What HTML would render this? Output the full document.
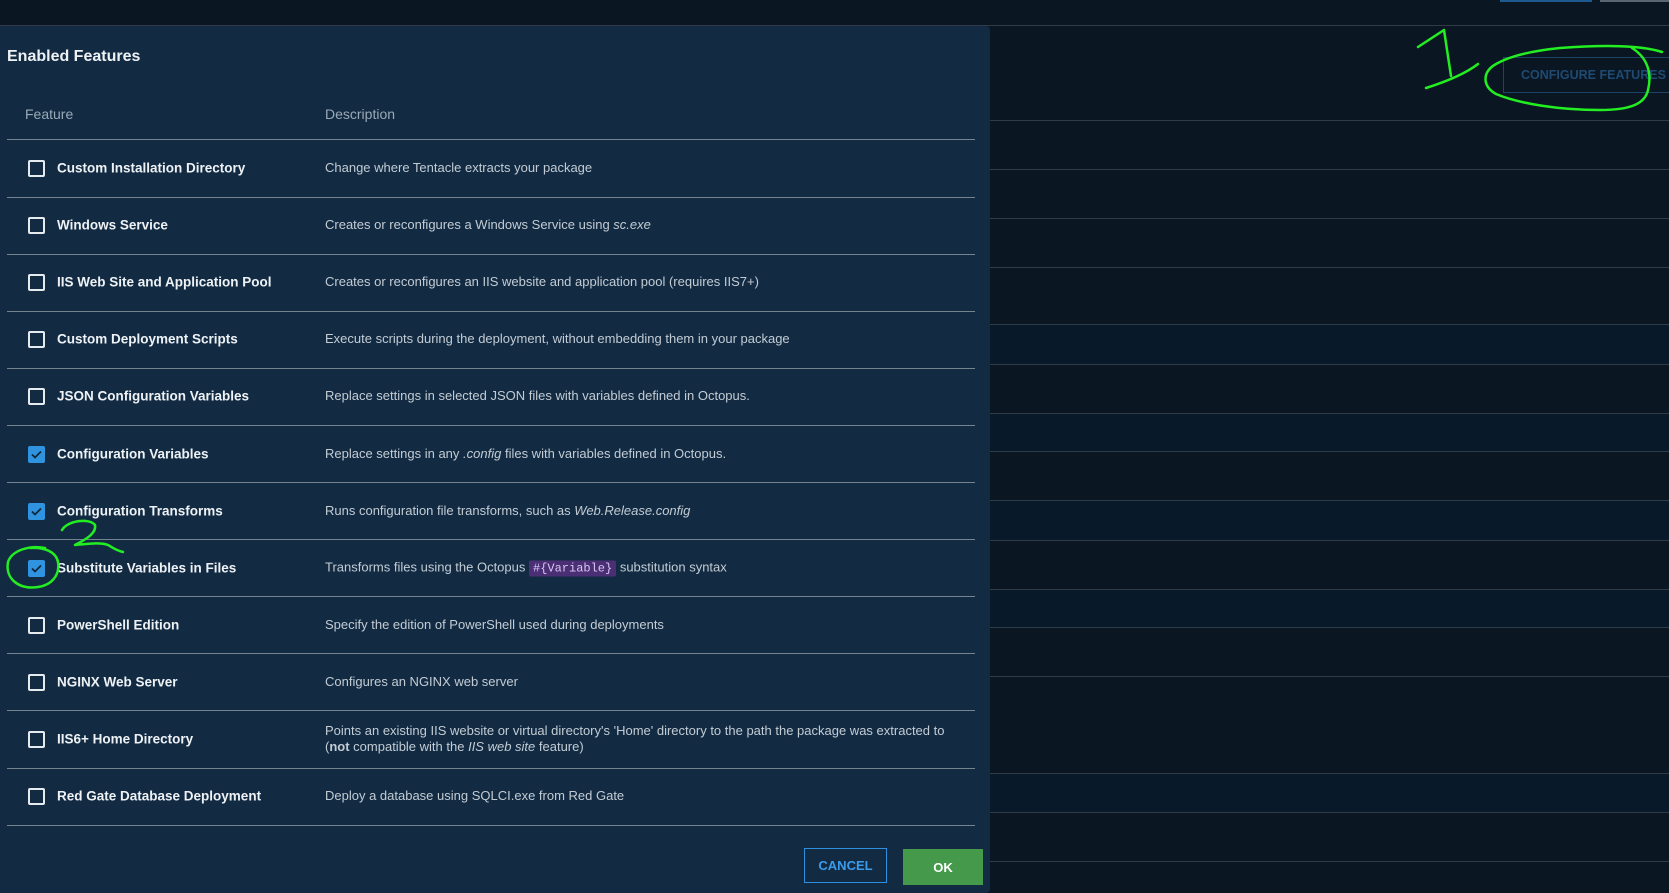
<!DOCTYPE html>
<html><head><meta charset="utf-8"><style>
*{margin:0;padding:0;box-sizing:border-box}
body{width:1669px;height:893px;background:#0a1722;position:relative;overflow:hidden;font-family:"Liberation Sans",sans-serif}
.hl{position:absolute;left:0;right:0;height:1px;background:#2f3c47}
.band{position:absolute;left:0;right:0;background:#081a2a}
#panel{position:absolute;left:0;top:26px;width:990px;height:867px;background:#122b43;border-radius:0 4px 4px 0}
.title{position:absolute;left:7px;top:22px;font-size:16px;font-weight:bold;color:#eef2f5}
.hdr{position:absolute;top:80px;font-size:14px;color:#9aa9b6}
.line{position:absolute;left:7px;width:968px;height:1px;background:#74838f}
.row{position:absolute;left:0;width:975px;height:57px}
.cb{position:absolute;left:28px;top:50%;margin-top:-8px;width:17px;height:17px;border:2px solid #e6ebef;border-radius:2px}
.cb.on{background:#2f93e0;border-color:#2f93e0}
.cb.on svg{position:absolute;left:-2px;top:-2px}
.nm{position:absolute;left:57px;top:50%;transform:translateY(-50%);font-size:13.5px;font-weight:bold;color:#eef2f5}
.ds{position:absolute;left:325px;top:50%;transform:translateY(-50%);font-size:13px;color:#c3ccd4;line-height:16px;width:640px}
code{font-family:"Liberation Mono",monospace;background:#4b2f74;color:#d9c6f3;padding:1px 4px;border-radius:2px;font-size:12px}
.btn{position:absolute;font-size:13px;font-weight:bold;display:flex;align-items:center;justify-content:center}
</style></head><body>
<div class="hl" style="top:25px"></div>
<div class="band" style="top:324px;height:40px"></div>
<div class="band" style="top:413px;height:38px"></div>
<div class="band" style="top:500px;height:40px"></div>
<div class="band" style="top:589px;height:38px"></div>
<div class="band" style="top:773px;height:39px"></div>
<div class="hl" style="top:120px"></div><div class="hl" style="top:169px"></div><div class="hl" style="top:218px"></div><div class="hl" style="top:267px"></div><div class="hl" style="top:324px"></div><div class="hl" style="top:364px"></div><div class="hl" style="top:413px"></div><div class="hl" style="top:451px"></div><div class="hl" style="top:500px"></div><div class="hl" style="top:540px"></div><div class="hl" style="top:589px"></div><div class="hl" style="top:627px"></div><div class="hl" style="top:676px"></div><div class="hl" style="top:773px"></div><div class="hl" style="top:812px"></div><div class="hl" style="top:861px"></div>
<div style="position:absolute;left:1500px;top:0;width:92px;height:2px;background:#1e5a8f"></div>
<div style="position:absolute;left:1600px;top:0;width:69px;height:2px;background:#5a6570"></div>
<div style="position:absolute;left:1503px;top:57px;width:180px;height:36px;border:1px solid #1d4366;color:#1f4a72;font-size:12.5px;font-weight:bold;display:flex;align-items:center;padding-left:17px">CONFIGURE FEATURES</div>

<div id="panel">
<div class="title">Enabled Features</div>
<div class="hdr" style="left:25px">Feature</div>
<div class="hdr" style="left:325px">Description</div>
<div class="line" style="top:113px"></div>
</div>
<div id="rows"></div>
<script>
var R=[["Custom Installation Directory","Change where Tentacle extracts your package",0],
["Windows Service","Creates or reconfigures a Windows Service using <i>sc.exe</i>",0],
["IIS Web Site and Application Pool","Creates or reconfigures an IIS website and application pool (requires IIS7+)",0],
["Custom Deployment Scripts","Execute scripts during the deployment, without embedding them in your package",0],
["JSON Configuration Variables","Replace settings in selected JSON files with variables defined in Octopus.",0],
["Configuration Variables","Replace settings in any <i>.config</i> files with variables defined in Octopus.",1],
["Configuration Transforms","Runs configuration file transforms, such as <i>Web.Release.config</i>",1],
["Substitute Variables in Files","Transforms files using the Octopus <code>#{Variable}</code> substitution syntax",1],
["PowerShell Edition","Specify the edition of PowerShell used during deployments",0],
["NGINX Web Server","Configures an NGINX web server",0],
["IIS6+ Home Directory","Points an existing IIS website or virtual directory's 'Home' directory to the path the package was extracted to (<b>not</b> compatible with the <i>IIS web site</i> feature)",0],
["Red Gate Database Deployment","Deploy a database using SQLCI.exe from Red Gate",0]];
var h="";var tick='<svg width="17" height="17" viewBox="0 0 17 17"><path d="M4 8.5l3 3 6-6" stroke="#12283c" stroke-width="1.8" fill="none"/></svg>';
R.forEach(function(r,i){var t=139.5+i*57.1;
h+='<div class="row" style="top:'+t+'px"><div class="cb'+(r[2]?' on':'')+'">'+(r[2]?tick:'')+'</div><div class="nm">'+r[0]+'</div><div class="ds">'+r[1]+'</div></div><div class="line" style="top:'+(t+57)+'px"></div>';});
document.getElementById('rows').innerHTML=h;
</script>
<div class="btn" style="left:804px;top:848px;width:83px;height:35px;border:1px solid #2f8fe0;color:#3b9bea">CANCEL</div>
<div class="btn" style="left:903px;top:849px;width:80px;height:36px;background:#44994a;color:#fff">OK</div>
<svg style="position:absolute;left:0;top:0" width="1669" height="893" fill="none" stroke="#22ee22" stroke-width="2.5" stroke-linecap="round" stroke-linejoin="round">
<path d="M1418 47 L1444 30 L1451 76"/>
<path d="M1426 88 C1445 82 1465 74 1478 64"/>
<path d="M1662 52 C1640 45 1600 45 1560 48 C1530 51 1510 56 1496 64 C1482 72 1482 86 1496 94 C1520 104 1560 110 1600 110 C1630 110 1645 104 1648 90 C1652 74 1648 58 1632 48"/>
<path d="M62 530 C68 520 90 518 95 525 C97 535 80 542 75 545 C85 544 100 542 108 545 C112 547 115 550 123 552"/>
<path d="M45 548 C30 545 12 550 8 562 C5 578 18 590 38 587 C52 585 60 575 58 562 C56 552 45 547 30 548"/>
</svg>
</body></html>
